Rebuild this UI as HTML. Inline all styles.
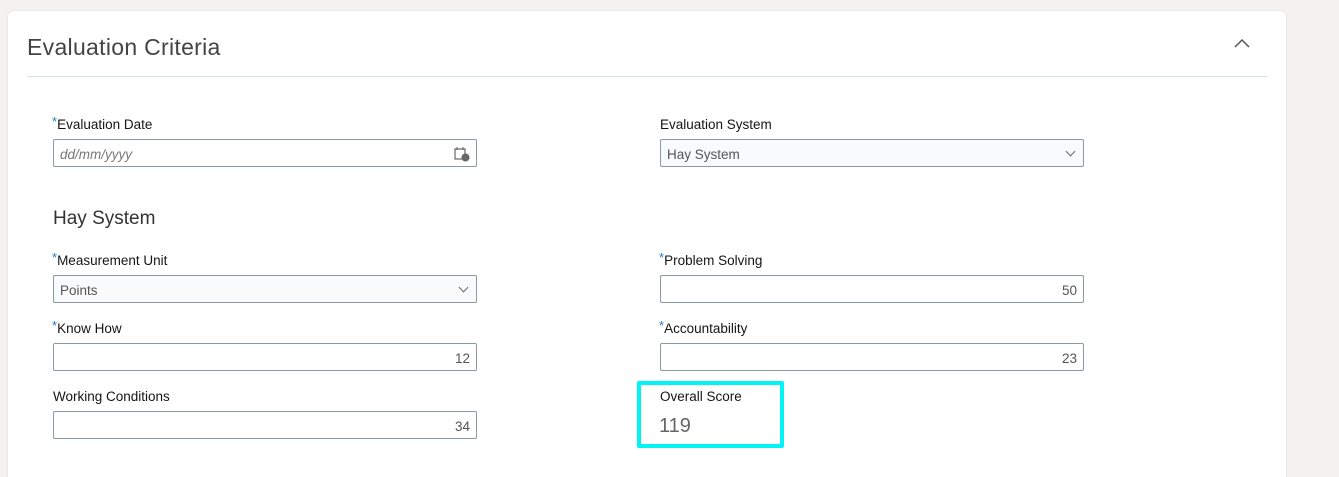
<!DOCTYPE html>
<html><head><style>
html,body{margin:0;width:1339px;height:477px;overflow:hidden}
body{background:#f3f2f0;font-family:"Liberation Sans",sans-serif;position:relative}
.card{position:absolute;left:8px;top:11px;width:1278px;height:480px;background:#fff;border-radius:6px;box-shadow:0 0 2px rgba(0,0,0,.12)}
h1{position:absolute;left:27px;top:34px;margin:0;font-weight:300;font-size:23px;color:#444;letter-spacing:.3px}
.hr{position:absolute;left:27px;top:76px;width:1240px;height:1px;background:#d6e0e8}
.lbl{position:absolute;font-size:13.5px;color:#161513}
.lbl b{color:#227bc1;font-weight:normal;position:relative;top:-3px;font-size:13px}
.in{position:absolute;width:422px;height:26px;border:1px solid #8b99a3;border-radius:2px;background:#fff;font-size:13.5px;color:#555;box-sizing:content-box}
.in span{position:absolute;top:7px}
.sel{background:#f8fafc}
.r{right:6px}
.chev{position:absolute;right:9px;top:8px;width:6px;height:6px;border-right:1px solid #666;border-bottom:1px solid #666;transform:rotate(45deg)}
h2{position:absolute;left:53px;top:208px;margin:0;font-weight:normal;font-size:19px;color:#333}
.box{position:absolute;left:637px;top:381px;width:139px;height:59px;border:4px solid #00f4f4;border-radius:2px}
</style></head><body>
<div class="card"></div>
<h1>Evaluation Criteria</h1>
<svg style="position:absolute;left:1234px;top:38px" width="16" height="10"><path d="M1 9 L8 2 L15 9" fill="none" stroke="#555" stroke-width="1.5"/></svg>
<div class="hr"></div>

<div class="lbl" style="left:52px;top:117px"><b>*</b>Evaluation Date</div>
<div class="in" style="left:53px;top:139px"><span style="left:6px;font-style:italic;color:#777">dd/mm/yyyy</span>
<svg style="position:absolute;right:6px;top:6px" width="16" height="16"><rect x="1" y="3" width="10" height="10" fill="none" stroke="#666" stroke-width="1.2"/><path d="M3 1v3M9 1v3" stroke="#666"/><circle cx="11.5" cy="11.5" r="4" fill="#666"/></svg></div>

<div class="lbl" style="left:660px;top:117px">Evaluation System</div>
<div class="in sel" style="left:660px;top:139px"><span style="left:6px">Hay System</span><div class="chev"></div></div>

<h2>Hay System</h2>

<div class="lbl" style="left:52px;top:253px"><b>*</b>Measurement Unit</div>
<div class="in sel" style="left:53px;top:275px"><span style="left:6px">Points</span><div class="chev"></div></div>
<div class="lbl" style="left:659px;top:253px"><b>*</b>Problem Solving</div>
<div class="in" style="left:660px;top:275px"><span class="r">50</span></div>

<div class="lbl" style="left:52px;top:321px"><b>*</b>Know How</div>
<div class="in" style="left:53px;top:343px"><span class="r">12</span></div>
<div class="lbl" style="left:659px;top:321px"><b>*</b>Accountability</div>
<div class="in" style="left:660px;top:343px"><span class="r">23</span></div>

<div class="lbl" style="left:53px;top:389px">Working Conditions</div>
<div class="in" style="left:53px;top:411px"><span class="r">34</span></div>

<div class="box"></div>
<div class="lbl" style="left:660px;top:389px">Overall Score</div>
<div style="position:absolute;left:659px;top:415px;font-size:20px;color:#666">119</div>
</body></html>
